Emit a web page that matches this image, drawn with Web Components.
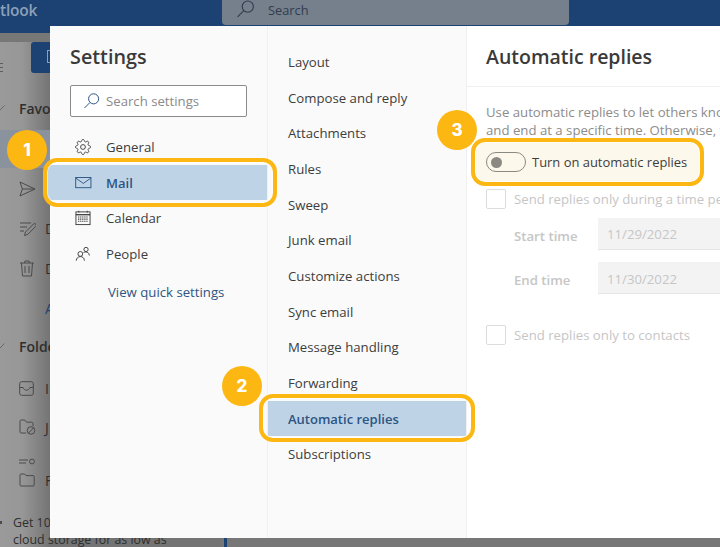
<!DOCTYPE html>
<html>
<head>
<meta charset="utf-8">
<style>
  html, body { margin: 0; padding: 0; }
  body { width: 720px; height: 547px; overflow: hidden; font-family: "Open Sans", "Noto Sans", sans-serif; }
</style>
</head>
<body>
<outlook-page></outlook-page>

<script>
// scalloped outline for the settings cog
function gearPath() {
  let d = '';
  for (let i = 0; i <= 96; i++) {
    const t = i / 96 * Math.PI * 2;
    const r = 7.4 + 1.05 * Math.max(-0.7, Math.min(0.7, Math.cos(8 * t))) / 0.7;
    d += (i ? 'L' : 'M') + (9 + r * Math.cos(t)).toFixed(2) + ' ' + (9 + r * Math.sin(t)).toFixed(2);
  }
  return d + 'Z';
}

const ICONS = {
  search: '<svg width="20" height="20" viewBox="0 0 20 20" fill="none" stroke="currentColor" stroke-width="1.1"><circle cx="11.8" cy="7.6" r="5.6"/><path d="M7.8 11.6 1.6 17.8"/></svg>',
  gear: `<svg width="16" height="16" viewBox="0 0 18 18" fill="none" stroke="currentColor" stroke-width="1.05"><path d="${gearPath()}"/><circle cx="9" cy="9" r="2.7"/></svg>`,
  mail: '<svg width="17" height="13" viewBox="0 0 18 14" fill="none" stroke="currentColor" stroke-width="1"><rect x=".6" y="1.6" width="16.4" height="11"/><path d="M.6 2.2 8.8 8l8.2-5.8"/></svg>',
  calendar: '<svg width="16" height="16" viewBox="0 0 17 17" fill="none" stroke="currentColor" stroke-width="1"><rect x="1" y="2" width="15" height="13.5"/><path d="M1 5h15" stroke-width="1.4"/><path d="M4 .8v2M13 .8v2"/><path d="M3.2 7.5h10.6M3.2 9.7h10.6M3.2 11.9h10.6" stroke-dasharray="1.4 .8" stroke-width="1.2"/></svg>',
  people: '<svg width="16" height="16" viewBox="0 0 18 17" fill="none" stroke="currentColor" stroke-width="1.05"><circle cx="6" cy="8.4" r="2.7"/><path d="M1.4 16c.2-2.8 2-4.6 4.6-4.6S10.4 13 10.6 16"/><circle cx="12.4" cy="3.4" r="2.4"/><path d="M9.6 6.9c1.6-.9 3.6-.9 4.8 0 1 .7 1.7 1.9 1.8 3.3"/></svg>',
  send: '<svg width="17" height="16" viewBox="0 0 17 16" fill="none" stroke="currentColor" stroke-width="1"><path d="M1 1 16 8 1 15l2.4-7zM3.4 8H16"/></svg>',
  draft: '<svg width="17" height="17" viewBox="0 0 17 17" fill="none" stroke="currentColor" stroke-width="1"><path d="M1 3h11M1 7h7M1 11h4M5.5 15.5l1-3.5 8-8a1.6 1.6 0 0 1 2.3 2.3l-8 8z"/></svg>',
  trash: '<svg width="16" height="17" viewBox="0 0 16 17" fill="none" stroke="currentColor" stroke-width="1"><path d="M1 3h14M5.5 3 6 1h4l.5 2M2.5 3l1 13h9l1-13M6 6v7M10 6v7"/></svg>',
  inbox: '<svg width="15" height="15" viewBox="0 0 15 15" fill="none" stroke="currentColor" stroke-width="1"><rect x=".7" y=".7" width="13.6" height="13.6" rx="2"/><path d="M.7 6.5h3.4c.5 1.8 1.8 2.6 3.4 2.6s2.9-.8 3.4-2.6h3.4"/></svg>',
  junk: '<svg width="17" height="16" viewBox="0 0 17 16" fill="none" stroke="currentColor" stroke-width="1"><path d="M7 14H2.3A1.3 1.3 0 0 1 1 12.7V2.3A1.3 1.3 0 0 1 2.3 1h3.4l1.8 2.2h5.2a1.3 1.3 0 0 1 1.3 1.3V7"/><circle cx="12" cy="11.5" r="3.8"/><path d="m9.4 14.2 5.2-5.4"/></svg>',
  folder: '<svg width="16" height="14" viewBox="0 0 16 14" fill="none" stroke="currentColor" stroke-width="1"><path d="M1 12V1.8A1 1 0 0 1 2 1h3.6L7 2.6h7.2a1 1 0 0 1 1 1V12a1 1 0 0 1-1 1H2a1 1 0 0 1-1-1z"/></svg>',
  rule: '<svg width="17" height="7" viewBox="0 0 17 7" fill="none" stroke="currentColor" stroke-width="1"><path d="M0 2h9M0 5h7"/><circle cx="13" cy="3.5" r="2.4"/></svg>',
  chevron: '<svg width="5" height="6" viewBox="0 0 5 6" fill="none" stroke="#6a6a6a" stroke-width="1"><path d="M0 5 4.5 .5"/></svg>'
};

// grey app that sits behind the dialog
class OutlookBackdrop extends HTMLElement {
  constructor() {
    super();
    this.attachShadow({ mode: 'open' });
    const rows = [['send', 'S'], ['draft', 'D'], ['trash', 'D']]
      .map(r => `<div class="row"><span class="ic">${ICONS[r[0]]}</span><span>${r[1]}</span></div>`).join('');
    this.shadowRoot.innerHTML = `
      <style>
        :host { display: block; width: 720px; height: 547px; background: #777; color: #2e2e2e; font-size: 14px; }
        .top { height: 33px; background: #1b4272; display: flex; color: #8da0b8; }
        .brand { width: 222px; font-size: 15.5px; letter-spacing: -.2px; font-weight: 600; line-height: 21px; white-space: nowrap; }
        .search { width: 347px; height: 25px; background: #76808c; border-radius: 0 0 4px 4px; display: flex; align-items: flex-start; gap: 12px; padding-left: 14px; color: #2f3c4d; box-sizing: border-box; font-size: 12.8px; line-height: 20px; }
        .search svg { display: block; margin-top: -1px; }
        .pane { position: relative; width: 222px; height: 514px; background: linear-gradient(90deg, #9a9a9a, #979797 22px, #747474 50px); }
        .burger { position: absolute; left: 0; top: 21px; width: 3px; height: 9px; background: repeating-linear-gradient(#5e5e5e 0 1px, transparent 1px 4px); }
        .compose { margin: 9px 0 0 31px; width: 40px; height: 31px; background: #1b4272; border-radius: 3px; position: relative; }
        .compose i { position: absolute; left: 16px; top: 8px; width: 8px; height: 13px; box-sizing: border-box; border: 1px solid #8da0b8; }
        .head { position: relative; font-weight: 600; margin-left: 19px; line-height: 20px; white-space: nowrap; }
        .head svg { position: absolute; left: -19px; top: 6px; }
        .sel { height: 38px; margin-top: 11px; background: #8a929e; }
        .row { display: flex; align-items: center; gap: 9px; padding-left: 19px; height: 39.5px; white-space: nowrap; }
        .ic { width: 17px; display: flex; color: #4a4a4a; }
        .more { margin: 11px 0 0 45px; color: #1b4272; line-height: 20px; }
        .promo { position: relative; margin: 23.5px 0 0 13px; line-height: 17px; font-size: 12.4px; white-space: nowrap; }
        .promo i { position: absolute; left: -13px; top: 7px; width: 2px; height: 3px; background: #4a4a4a; }
        .mark { position: absolute; left: 224px; top: 538px; width: 3px; height: 9px; background: #1b4272; }
      </style>
      <div class="top"><div class="brand">tlook</div><div class="search">${ICONS.search}<span>Search</span></div></div>
      <div class="pane">
        <div class="burger"></div>
        <div class="compose"><i></i></div>
        <div class="head" style="margin-top:26px;">${ICONS.chevron}Favorites</div>
        <div class="sel"></div>
        <div style="margin-top:1.5px;">${rows}</div>
        <div class="more">A</div>
        <div class="head" style="margin-top:18px;">${ICONS.chevron}Folders</div>
        <div class="row" style="margin-top:16px;height:30px;"><span class="ic">${ICONS.inbox}</span><span>I</span></div>
        <div class="row" style="margin-top:9px;height:30px;"><span class="ic">${ICONS.junk}</span><span>J</span></div>
        <div class="row" style="margin-top:15px;height:8px;"><span class="ic">${ICONS.rule}</span></div>
        <div class="row" style="margin-top:5px;height:20px;"><span class="ic">${ICONS.folder}</span><span>F</span></div>
        <div class="promo"><i></i>Get 10<br>cloud storage for as low as</div>
      </div>
      <div class="mark"></div>
    `;
  }
}

// one row in the dialog's first two columns
class NavItem extends HTMLElement {
  constructor() {
    super();
    this.attachShadow({ mode: 'open' });
    const icon = this.getAttribute('icon');
    this.shadowRoot.innerHTML = `
      <style>
        :host { display: flex; align-items: center; height: 35.68px; box-sizing: border-box; color: #3d3d3d; font-size: 13.2px; white-space: nowrap; }
        :host([selected]) { background: #bfd3e6; color: #2c5583; font-weight: 600; font-size: 13px; }
        .ic { width: 31.5px; margin-left: 24.5px; display: flex; color: #3d3d3d; }
        :host([selected]) .ic { color: #2c5583; }
      </style>
      ${icon ? `<span class="ic">${ICONS[icon]}</span>` : ''}
      <slot></slot>
    `;
  }
}

class SettingsDialog extends HTMLElement {
  constructor() {
    super();
    this.attachShadow({ mode: 'open' });
    this.shadowRoot.innerHTML = `
      <style>
        :host { position: absolute; left: 50px; top: 26px; width: 670px; height: 512px; background: #fff; display: flex; overflow: hidden; color: #3d3d3d; }
        .col1 { width: 217px; background: #fafafa; border-right: 1px solid #f0f0f0; flex: none; }
        .col2 { background: #fafafa; border-right: 1px solid #f0f0f0; flex: none; padding-top: 18px; box-sizing: border-box; width: 199px; }
        .col2 nav-item { padding-left: 20px; }
        .col3 { flex: 1; min-width: 0; white-space: nowrap; overflow: hidden; }
        h1 { margin: 17px 0 0 20px; font-size: 19.8px; font-weight: 600; line-height: 28px; color: #3a3a3a; }
        .find { margin: 14px 0 0 20px; width: 177px; height: 32px; box-sizing: border-box; border: 1px solid #8a8a8a; border-radius: 2px; background: #fff; display: flex; align-items: center; gap: 5px; padding-left: 12px; font-size: 13.2px; color: #8a8a8a; }
        .find svg { color: #2c5583; width: 18px; height: 18px; }
        .nav { margin-top: 12px; }
        .quick { margin: 10px 0 0 58px; font-size: 13.2px; color: #2c5583; line-height: 20px; }
        h2 { margin: 0; padding: 16px 0 14px 19px; font-size: 19.5px; font-weight: 600; line-height: 30px; color: #3a3a3a; border-bottom: 1px solid #f0f0f0; }
        .desc { margin: 16px 0 0 19px; font-size: 13.2px; line-height: 18px; color: #8c8c8c; }
        .toggle-row { margin: 3px 0 0 8px; padding-left: 11px; width: 225px; box-sizing: border-box; background: #fdf8ec; display: flex; align-items: center; gap: 6px; height: 40px; font-size: 12.95px; color: #3d3d3d; }
        .toggle { width: 40px; height: 20px; flex: none; box-sizing: border-box; border: 1px solid #8a8a82; border-radius: 10px; display: flex; align-items: center; padding-left: 4px; }
        .toggle i { width: 11px; height: 11px; border-radius: 50%; background: #8a8a82; }
        .check { display: flex; align-items: center; gap: 8px; margin-left: 19px; font-size: 13.2px; color: #c6c6c6; height: 20px; }
        .check i { width: 20px; height: 20px; flex: none; box-sizing: border-box; border: 1px solid #dcdcdc; border-radius: 2px; }
        .time { display: flex; align-items: center; margin-left: 47px; font-size: 13.2px; font-weight: 600; color: #c6c6c6; height: 32px; }
        .time span { width: 84px; padding-top: 3px; }
        .time b { font-weight: 400; flex: 1; height: 32px; line-height: 33px; background: #f3f3f3; border-bottom: 1px solid #e6e6e6; box-sizing: border-box; padding-left: 9px; }
      </style>
      <div class="col1">
        <h1>Settings</h1>
        <div class="find">${ICONS.search}<span>Search settings</span></div>
        <div class="nav">
          <nav-item icon="gear">General</nav-item>
          <nav-item icon="mail" selected>Mail</nav-item>
          <nav-item icon="calendar">Calendar</nav-item>
          <nav-item icon="people">People</nav-item>
        </div>
        <div class="quick">View quick settings</div>
      </div>
      <div class="col2">
        <nav-item>Layout</nav-item>
        <nav-item>Compose and reply</nav-item>
        <nav-item>Attachments</nav-item>
        <nav-item>Rules</nav-item>
        <nav-item>Sweep</nav-item>
        <nav-item>Junk email</nav-item>
        <nav-item>Customize actions</nav-item>
        <nav-item>Sync email</nav-item>
        <nav-item>Message handling</nav-item>
        <nav-item>Forwarding</nav-item>
        <nav-item selected>Automatic replies</nav-item>
        <nav-item>Subscriptions</nav-item>
      </div>
      <div class="col3">
        <h2>Automatic replies</h2>
        <div class="desc">Use automatic replies to let others know you're on vacation or not available.<br>and end at a specific time. Otherwise, they'll continue until you turn them off.</div>
        <div class="toggle-row"><span class="toggle"><i></i></span><span>Turn on automatic replies</span></div>
        <div class="check" style="margin-top:7px;"><i></i><span>Send replies only during a time period</span></div>
        <div class="time" style="margin-top:9px;"><span>Start time</span><b>11/29/2022</b></div>
        <div class="time" style="margin-top:12px;"><span>End time</span><b style="line-height:35px;">11/30/2022</b></div>
        <div class="check" style="margin-top:31px;"><i></i><span>Send replies only to contacts</span></div>
      </div>
    `;
  }
}

// numbered yellow circle of the tutorial
class StepBadge extends HTMLElement {
  constructor() {
    super();
    this.attachShadow({ mode: 'open' });
    this.shadowRoot.innerHTML = `
      <style>
        :host { position: absolute; width: 40px; height: 40px; border-radius: 50%; background: #fcb713; color: #fff; font: 800 17px "Inter", "Open Sans", sans-serif; display: flex; align-items: center; justify-content: center; left: var(--x); top: var(--y); }
      </style>
      <slot></slot>
    `;
  }
}

// rounded yellow outline drawn over a highlighted row
class StepFrame extends HTMLElement {
  constructor() {
    super();
    this.attachShadow({ mode: 'open' });
    this.shadowRoot.innerHTML = `
      <style>
        :host { position: absolute; box-sizing: border-box; border: 4px solid #fcb713; border-radius: 14px; left: var(--x); top: var(--y); width: var(--w); height: var(--h); background: var(--fill, none); box-shadow: inset 0 0 0 1px rgba(255,255,255,.6); }
      </style>
    `;
  }
}

class OutlookPage extends HTMLElement {
  constructor() {
    super();
    this.attachShadow({ mode: 'open' });
    this.shadowRoot.innerHTML = `
      <style>
        :host { display: block; position: relative; width: 720px; height: 547px; overflow: hidden; }
      </style>
      <outlook-backdrop></outlook-backdrop>
      <settings-dialog></settings-dialog>
      <step-frame style="--x:43px;--y:158px;--w:234px;--h:49px;--fill:linear-gradient(90deg,#bfd3e6 3px,transparent 3px);"></step-frame>
      <step-frame style="--x:259px;--y:394px;--w:216px;--h:48px;"></step-frame>
      <step-frame style="--x:471px;--y:138px;--w:233px;--h:48px;"></step-frame>
      <step-badge style="--x:7px;--y:130px;">1</step-badge>
      <step-badge style="--x:222px;--y:366px;">2</step-badge>
      <step-badge style="--x:437px;--y:110px;">3</step-badge>
    `;
  }
}

customElements.define('outlook-backdrop', OutlookBackdrop);
customElements.define('nav-item', NavItem);
customElements.define('settings-dialog', SettingsDialog);
customElements.define('step-badge', StepBadge);
customElements.define('step-frame', StepFrame);
customElements.define('outlook-page', OutlookPage);
</script>
</body>
</html>
